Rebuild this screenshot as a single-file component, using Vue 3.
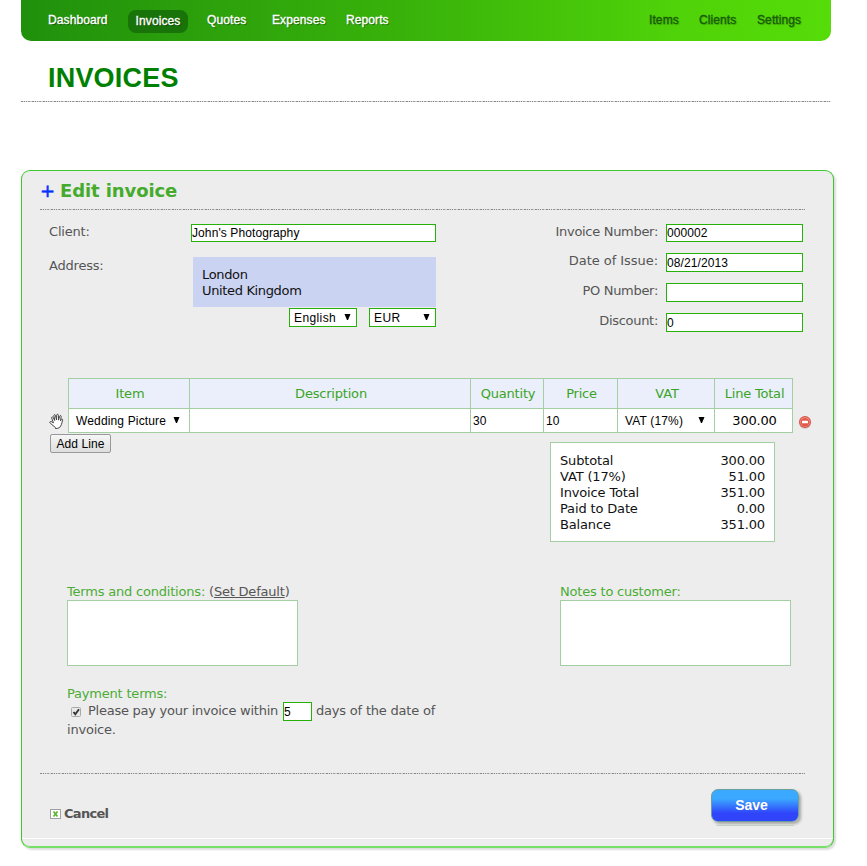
<template>
  <div class="page">
    <nav class="nav">
      <a
        v-for="item in mainMenu"
        :key="item"
        class="nav-item"
        :class="{ active: item === 'Invoices' }"
      >{{ item }}</a>
      <a v-for="item in sideMenu" :key="item" class="nav-item side">{{ item }}</a>
    </nav>

    <h1 class="page-title">INVOICES</h1>
    <div class="dots" />

    <div class="panel">
      <div class="panel-body">
        <h2 class="panel-title"><span class="plus">+</span>Edit invoice</h2>
        <div class="dots" />

        <div class="details">
          <div class="client">
            <label class="client-label">Client:</label>
            <input v-model="client" class="field client-input">
            <label class="client-label address-label">Address:</label>
            <div class="address">London<br>United Kingdom</div>
            <div class="selects">
              <div class="field select language">
                <span>English</span>
                <svg class="arrow" viewBox="0 0 7 6"><path d="M.5 0h6L4 6H3z" /></svg>
              </div>
              <div class="field select currency">
                <span>EUR</span>
                <svg class="arrow" viewBox="0 0 7 6"><path d="M.5 0h6L4 6H3z" /></svg>
              </div>
            </div>
          </div>

          <div class="meta">
            <div v-for="row in meta" :key="row.label" class="meta-row">
              <label>{{ row.label }}</label>
              <input v-model="row.value" class="field">
            </div>
          </div>
        </div>

        <div class="lines">
          <svg class="hand" viewBox="0 0 15 16">
            <path d="M6.500 14.600C4.800 13.400 3.200 11.500 1.300 10.200.3 9.400.9 8.200 2.200 8.600l2.300 1.200L2.700 5.200c-.5-1.300.9-1.900 1.500-.7l1.500 3L4.900 2.800c-.2-1.400 1.300-1.600 1.600-.3l1 4.500.2-4.900c.1-1.200 1.600-1.100 1.700.1l.1 4.900 1.200-3.900c.4-1.200 1.700-.7 1.500.4l-.7 4.200.8-1.300c.6-.9 1.600-.3 1.300.7-.8 3-1.100 5.300-3.100 7.400-1.100.8-2.800.8-4 1z" />
          </svg>
          <div class="table">
            <div v-for="head in heads" :key="head" class="th">{{ head }}</div>
            <div class="td item-cell">
              <span>Wedding Picture</span>
              <svg class="arrow" viewBox="0 0 7 6"><path d="M.5 0h6L4 6H3z" /></svg>
            </div>
            <div class="td" />
            <div class="td">30</div>
            <div class="td">10</div>
            <div class="td vat-cell">
              <span>VAT (17%)</span>
              <svg class="arrow" viewBox="0 0 7 6"><path d="M.5 0h6L4 6H3z" /></svg>
            </div>
            <div class="td total-cell">300.00</div>
          </div>
          <svg class="remove" viewBox="0 0 14 14">
            <circle cx="7" cy="7.600" r="6.300" fill="#d0cccc" />
            <circle cx="7" cy="7" r="6" fill="#d8584b" />
            <circle cx="7" cy="7" r="4.800" fill="#f09a8f" />
            <circle cx="7" cy="7.200" r="4.200" fill="#e2594b" />
            <rect x="4" y="5.700" width="6" height="2.600" rx=".6" fill="#fff" />
          </svg>
        </div>

        <button class="add-line">Add Line</button>

        <div class="totals">
          <div v-for="row in totals" :key="row.label" class="totals-row">
            <span>{{ row.label }}</span>
            <span>{{ row.value }}</span>
          </div>
        </div>

        <div class="texts">
          <div class="text-block">
            <div class="green">Terms and conditions: <span class="paren">(<u>Set Default</u>)</span></div>
            <textarea class="area" />
          </div>
          <div class="text-block">
            <div class="green">Notes to customer:</div>
            <textarea class="area" />
          </div>
        </div>

        <div class="payment">
          <div class="green">Payment terms:</div>
          <div class="payment-text">
            <svg class="check" viewBox="0 0 11 11">
              <rect x=".5" y=".5" width="9" height="9" rx="1" fill="#e8e8e8" stroke="#a9a9a9" />
              <path d="M2.500 5 4.300 7.200 8 2.300" fill="none" stroke="#333" stroke-width="1.900" />
            </svg>
            <span class="before">Please pay your invoice within</span>
            <input v-model="days" class="field days">
            <span>days of the date of</span>
          </div>
          <div class="payment-rest">invoice.</div>
        </div>

        <div class="dots" />

        <div class="actions">
          <a class="cancel">
            <svg viewBox="0 0 11 11">
              <rect x=".5" y=".5" width="10" height="9" fill="#fff" stroke="#a0a0a0" />
              <path d="M3.500 2.500 7.500 7.500M7.500 2.500 3.500 7.500" stroke="#58b52c" stroke-width="1.700" />
            </svg>
            Cancel
          </a>
          <div class="save-wrap">
            <button class="save">Save</button>
          </div>
        </div>
      </div>
      <div class="panel-foot" />
    </div>
  </div>
</template>

<script setup>
import { ref } from 'vue'

const mainMenu = ['Dashboard', 'Invoices', 'Quotes', 'Expenses', 'Reports']
const sideMenu = ['Items', 'Clients', 'Settings']
const heads = ['Item', 'Description', 'Quantity', 'Price', 'VAT', 'Line Total']

const client = ref("John's Photography")
const days = ref('5')

const meta = ref([
  { label: 'Invoice Number:', value: '000002' },
  { label: 'Date of Issue:', value: '08/21/2013' },
  { label: 'PO Number:', value: '' },
  { label: 'Discount:', value: '0' }
])

const totals = [
  { label: 'Subtotal', value: '300.00' },
  { label: 'VAT (17%)', value: '51.00' },
  { label: 'Invoice Total', value: '351.00' },
  { label: 'Paid to Date', value: '0.00' },
  { label: 'Balance', value: '351.00' }
]
</script>

<style>
body {
  margin: 0;
  background: #fff;
}
</style>

<style scoped>
* {
  box-sizing: border-box;
}

.page {
  width: 867px;
  height: 866px;
  padding-left: 21px;
  overflow: hidden;
  font: 13px/16px Verdana, "DejaVu Sans", sans-serif;
  letter-spacing: -0.2px;
  color: #555;
}

.nav {
  display: grid;
  grid-template-columns: 80px 79px 65px 74px 303px 50px 58px 60px;
  width: 810px;
  height: 41px;
  padding: 10px 0 0 27px;
  border-radius: 0 0 10px 10px;
  background: linear-gradient(90deg, #20900c, #3bb60a 52%, #4fd209 80%, #56dc08);
}

.nav-item {
  height: 20px;
  font: 12px/20px "Liberation Sans", Arial, sans-serif;
  letter-spacing: 0.1px;
  color: #fff;
  -webkit-text-stroke: 0.35px;
  text-shadow: 1px 1px 1px rgba(0, 0, 0, 0.45);
  white-space: nowrap;
}

.nav-item.active {
  width: 60px;
  height: 23px;
  line-height: 23px;
  text-align: center;
  border-radius: 8px;
  background: #187408;
}

.nav-item.side {
  color: #175c06;
  text-shadow: 1px 1px 1px rgba(0, 0, 0, 0.2);
}

.page-title {
  height: 60px;
  margin: 0;
  padding: 22px 0 0 27px;
  font: bold 27px/31px "Liberation Sans", Arial, sans-serif;
  letter-spacing: 0.2px;
  color: #008000;
}

.dots {
  width: 765px;
  height: 1px;
  background: repeating-linear-gradient(90deg, #888 0 2px, #d5d5d5 2px 3px, #888 3px 4px, #ddd 4px 5px, #888 5px 6px, #e2e2e2 6px 7px, #999 7px 9px, #ccc 9px 11px);
}

.page > .dots {
  width: 810px;
}

.panel {
  width: 813px;
  height: 678px;
  margin-top: 68px;
  border: 1px solid #3dc92c;
  border-bottom-color: #76df68;
  border-radius: 9px;
  background: #ededed;
  box-shadow: inset 0 -1px 0 #76df68, 2px 2px 2px rgba(0, 0, 0, 0.14);
}

.panel-body {
  height: 667px;
  padding-left: 18px;
}

.panel-foot {
  height: 1px;
  background: #fff;
}

.panel-title {
  display: flex;
  height: 38px;
  margin: 0;
  padding-top: 8px;
  font-size: 18px;
  line-height: 23px;
  letter-spacing: -0.1px;
  color: #45ab2c;
}

.plus {
  width: 20px;
  font-size: 18px;
  font-weight: normal;
  color: #0432ff;
  -webkit-text-stroke: 0.5px;
}

.field {
  border: 1px solid #25b00a;
  border-radius: 0;
  background: #fff;
  padding: 0;
  font: 12px/17px "Liberation Sans", Arial, sans-serif;
  letter-spacing: 0.1px;
  color: #000;
  outline: none;
}

.details {
  display: flex;
  justify-content: space-between;
  width: 763px;
  height: 168px;
  padding: 14px 0 0 9px;
}

.client {
  display: grid;
  grid-template-columns: 142px 245px;
  grid-template-rows: 33px 51px 19px;
  width: 387px;
}

.client-input {
  height: 18px;
}

.address {
  height: 50px;
  margin-left: 2px;
  padding: 10px 9px;
  background: #cad3f2;
  color: #111;
  letter-spacing: -0.35px;
}

.address-label {
  padding-top: 1px;
}

.selects {
  grid-column: 2;
  display: flex;
  justify-content: flex-end;
  gap: 12px;
}

.select {
  display: flex;
  justify-content: space-between;
  padding: 0 5px 0 4px;
  height: 19px;
  line-height: 18px;
  letter-spacing: 0.4px;
}

.language {
  width: 68px;
}

.currency {
  width: 67px;
}

.arrow {
  width: 7px;
  height: 6px;
  margin-top: 5px;
}

.meta {
  display: grid;
  grid-template-rows: 29px 30px 30px 30px;
}

.meta-row {
  display: flex;
  justify-content: flex-end;
  gap: 8px;
  letter-spacing: -0.3px;
}

.meta-row:nth-child(2) {
  letter-spacing: -0.05px;
}

.meta-row .field {
  width: 137px;
  height: 19px;
}

.meta-row:first-child .field {
  height: 18px;
}

.lines {
  display: flex;
  align-items: flex-start;
  height: 55px;
  padding-left: 9px;
}

.hand {
  width: 15px;
  height: 16px;
  margin: 35px 4px 0 0;
  fill: #fff;
  stroke: #444;
  stroke-width: 1;
}

.table {
  display: grid;
  grid-template-columns: 121px 281px 73px 74px 97px 78px;
  grid-template-rows: 30px 24px;
  border-top: 1px solid #a3cfa3;
  border-left: 1px solid #a3cfa3;
}

.th,
.td {
  border-right: 1px solid #a3cfa3;
  border-bottom: 1px solid #a3cfa3;
}

.th {
  padding-left: 2px;
  background: #eaeffb;
  color: #3ba425;
  line-height: 29px;
  text-align: center;
  white-space: nowrap;
}

.td {
  background: #fff;
  padding-left: 2px;
  font: 12px/24px "Liberation Sans", Arial, sans-serif;
  letter-spacing: 0.15px;
  color: #000;
}

.item-cell,
.vat-cell {
  display: flex;
  justify-content: space-between;
  padding: 0 9px 0 7px;
  white-space: nowrap;
}

.item-cell .arrow,
.vat-cell .arrow {
  margin-top: 8px;
}

.total-cell {
  font: 13px/23px Verdana, "DejaVu Sans", sans-serif;
  letter-spacing: -0.2px;
  text-align: center;
}

.remove {
  width: 14px;
  height: 14px;
  margin: 37px 0 0 5px;
}

.add-line {
  display: block;
  width: 61px;
  height: 19px;
  margin: 1px 0 0 10px;
  padding: 0;
  border: 1px solid #999;
  border-radius: 2px;
  background: linear-gradient(#f6f6f6, #dedede);
  font: 12px/18px "Liberation Sans", Arial, sans-serif;
  letter-spacing: 0.1px;
  color: #000;
}

.totals {
  width: 225px;
  height: 100px;
  margin: -11px 0 0 510px;
  padding: 10px 9px;
  border: 1px solid #a3cfa3;
  background: #fff;
  color: #111;
  letter-spacing: -0.15px;
}

.totals-row {
  display: flex;
  justify-content: space-between;
}

.green {
  color: #4bac35;
}

.paren {
  color: #555;
}

.texts {
  display: flex;
  gap: 262px;
  height: 102px;
  margin-top: 42px;
  padding-left: 27px;
}

.text-block {
  width: 231px;
}

.area {
  display: block;
  width: 231px;
  height: 66px;
  border: 1px solid #a3cfa3;
  background: #fff;
  resize: none;
}

.payment {
  height: 87px;
  padding-left: 27px;
}

.payment-text {
  display: flex;
  height: 19px;
  line-height: 18px;
  white-space: nowrap;
}

.check {
  width: 11px;
  height: 11px;
  margin: 5px 6px 0 4px;
}

.before {
  width: 191px;
  letter-spacing: -0.25px;
}

.days {
  width: 29px;
  height: 19px;
  margin: 0 4px;
}

.payment-rest {
  line-height: 18px;
}

.actions {
  display: flex;
  justify-content: space-between;
  width: 759px;
  padding: 15px 0 0 10px;
}

.cancel {
  display: flex;
  gap: 3px;
  padding-top: 17px;
  font-weight: bold;
  letter-spacing: -0.7px;
}

.cancel svg {
  width: 11px;
  height: 11px;
  margin-top: 3px;
}

.save-wrap {
  height: 37px;
  background: linear-gradient(#c9dcc9, #c9dcc9) 5px 36px / 78px 1px no-repeat;
}

.save {
  display: block;
  width: 88px;
  height: 33px;
  padding: 0 7px 2px 0;
  border: 1px solid #6b9fa0;
  border-radius: 7px;
  background: linear-gradient(#3ba9ff 28%, #3044fa 75%);
  box-shadow: 2px 2px 3px rgba(0, 0, 0, 0.3);
  font: bold 14px/28px "Liberation Sans", Arial, sans-serif;
  color: #fff;
}
</style>
